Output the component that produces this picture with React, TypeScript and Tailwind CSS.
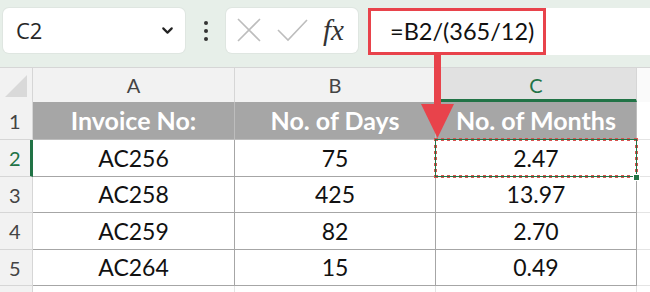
import { ChevronDown } from "lucide-react";

const rows = [
  { n: "2", a: "AC256", b: "75", c: "2.47" },
  { n: "3", a: "AC258", b: "425", c: "13.97" },
  { n: "4", a: "AC259", b: "82", c: "2.70" },
  { n: "5", a: "AC264", b: "15", c: "0.49" },
];

const heights = ["h-[37px]", "h-[36px]", "h-[37px]", "h-[36px]"];

export default function App() {
  return (
    <div className="relative h-[292px] w-[650px] overflow-hidden bg-white font-['Lato','Liberation_Sans',sans-serif]">
      {/* Formula bar */}
      <div className="flex h-[67px] items-start bg-[#e7efe9] pt-[8px]">
        <div className="ml-[3px] flex h-[45px] w-[182px] items-center justify-between rounded-[6px] bg-white pl-[13px] pr-[9px] shadow-[0_0_0_1px_#dfe6e1]">
          <span className="font-['Open_Sans',sans-serif] text-[22px] text-[#262626]">C2</span>
          <ChevronDown className="h-[17px] w-[17px] text-[#222]" strokeWidth={3} />
        </div>
        <div className="ml-[18px] flex h-[45px] w-[6px] flex-col items-center justify-center gap-[4px]">
          <span className="h-[4px] w-[4px] rounded-full bg-[#333]" />
          <span className="h-[4px] w-[4px] rounded-full bg-[#333]" />
          <span className="h-[4px] w-[4px] rounded-full bg-[#333]" />
        </div>
        <div className="ml-[17px] flex h-[45px] w-[132px] items-center rounded-[6px] bg-white pl-[11px] shadow-[0_0_0_1px_#dfe6e1]">
          <svg width="24" height="24" viewBox="0 0 24 24" className="mt-[-2px]">
            <path d="M1 1 L23 23 M23 1 L1 23" stroke="#bdbdbd" strokeWidth="1.6" fill="none" />
          </svg>
          <svg width="31" height="24" viewBox="0 0 31 24" className="ml-[16px] mt-[-2px]">
            <path d="M1 12 L11 22 L30 2" stroke="#bdbdbd" strokeWidth="1.6" fill="none" />
          </svg>
          <span className="ml-[15px] font-['Liberation_Serif',serif] text-[29px] italic leading-none text-[#333]">fx</span>
        </div>
        <div className="ml-[10px] flex h-[47px] flex-1 items-center bg-white">
          <div className="flex h-[47px] w-[178px] items-center border-[3px] border-[#e8434b] pl-[19px]">
            <span className="text-[23.5px] text-[#111]">=B2/(365/12)</span>
          </div>
        </div>
      </div>

      {/* Grid */}
      <div className="border-t border-[#d6d6d6]">
        {/* Column headers */}
        <div className="flex h-[34px] bg-[#f2f2f2]">
          <div className="flex w-[33px] items-end justify-end border-r border-[#d6d6d6] p-[5px]">
            <svg width="22" height="22" viewBox="0 0 22 22">
              <polygon points="22,0 22,22 0,22" fill="#d9d9d9" />
            </svg>
          </div>
          <div className="flex w-[202px] items-center justify-center border-r border-[#d6d6d6] text-[20px] text-[#444]">A</div>
          <div className="flex w-[201px] items-center justify-center border-r border-[#d6d6d6] text-[20px] text-[#444]">B</div>
          <div className="flex w-[201px] items-center justify-center border-b-[3px] border-r border-b-[#217346] border-r-[#d6d6d6] bg-[#e1e1e1] pt-[3px] text-[20px] text-[#217346]">C</div>
          <div className="flex-1 bg-[#fafafa]" />
        </div>

        {/* Header row */}
        <div className="flex h-[38px]">
          <div className="flex w-[33px] items-center border-r border-b border-[#d6d6d6] bg-[#f2f2f2] pl-[9px] text-[20px] text-[#444]">1</div>
          <div className="flex w-[202px] items-center justify-center border-r border-b border-[#bdbdbd] bg-[#a6a6a6] text-[25px] font-bold text-white">Invoice No:</div>
          <div className="flex w-[201px] items-center justify-center border-r border-b border-[#bdbdbd] bg-[#a6a6a6] text-[25px] font-bold text-white">No. of Days</div>
          <div className="flex w-[201px] items-center justify-center border-r border-b border-[#bdbdbd] bg-[#a6a6a6] text-[25px] font-bold text-white">No. of Months</div>
          <div className="flex-1 border-b border-[#e4e4e4]" />
        </div>

        {rows.map((r, i) => (
          <div key={r.n} className={`flex ${heights[i]}`}>
            <div
              className={`flex w-[33px] items-center border-b border-[#d6d6d6] bg-[#f2f2f2] pl-[9px] text-[20px] ${
                i === 0 ? "border-r-[3px] border-r-[#217346] bg-[#e1e1e1] text-[#217346]" : "border-r border-r-[#d6d6d6] text-[#444]"
              }`}
            >
              {r.n}
            </div>
            <div className="flex w-[202px] items-center justify-center border-r border-b border-[#a6a6a6] text-[23px] text-[#111]">{r.a}</div>
            <div className="flex w-[201px] items-center justify-center border-r border-b border-[#a6a6a6] text-[23px] text-[#111]">{r.b}</div>
            <div className="flex w-[201px] items-center justify-center border-r border-b border-[#a6a6a6] text-[23px] text-[#111]">{r.c}</div>
            <div className="flex-1 border-b border-[#e4e4e4]" />
          </div>
        ))}

        <div className="flex h-[10px]">
          <div className="w-[33px] border-r border-[#d6d6d6] bg-[#f2f2f2]" />
          <div className="w-[202px] border-r border-[#e4e4e4]" />
          <div className="w-[201px] border-r border-[#e4e4e4]" />
          <div className="w-[201px] border-r border-[#e4e4e4]" />
        </div>
      </div>

      {/* Selected cell C2 (copy marquee) */}
      <div className="absolute left-[434px] top-[138px] h-[40px] w-[204px] border-[3px] border-dotted border-[#d9534f] outline outline-1 -outline-offset-2 outline-[#217346]" />
      <div className="absolute left-[633px] top-[174px] h-[7px] w-[7px] border border-white bg-[#217346]" />

      {/* Arrow from formula to cell */}
      <div className="absolute left-[434px] top-[55px] h-[52px] w-[7px] bg-[#e8434b]" />
      <svg className="absolute left-[421px] top-[104px]" width="33" height="34" viewBox="0 0 33 34">
        <polygon points="0,0 33,0 16.5,34" fill="#e8434b" />
      </svg>
    </div>
  );
}
